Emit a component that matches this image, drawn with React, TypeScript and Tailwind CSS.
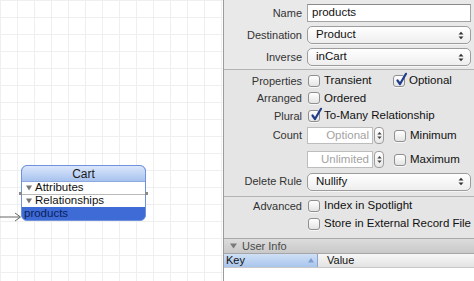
import React from "react";

const font = "font-['Liberation_Sans',Arial,sans-serif]";

function Check() {
  return (
    <svg
      className="absolute -top-[4px] left-[1px]"
      width="13"
      height="15"
      viewBox="0 0 13 15"
    >
      <path
        d="M2.5 8.5 L5 12 L11 1.8"
        fill="none"
        stroke="#1f3c8c"
        strokeWidth="2.2"
        strokeLinecap="round"
        strokeLinejoin="round"
      />
    </svg>
  );
}

function Checkbox({ checked = false }: { checked?: boolean }) {
  return (
    <span className="relative inline-block h-[12px] w-[12px] flex-shrink-0 rounded-[3px] border border-[#8f8f8f] bg-[linear-gradient(to_bottom,#ffffff,#e4e4e4)] shadow-[0_1px_0_rgba(255,255,255,0.7)]">
      {checked && <Check />}
    </span>
  );
}

function UpDown({ color = "#333" }: { color?: string }) {
  return (
    <svg width="6" height="9" viewBox="0 0 6 9">
      <path d="M0.5 3.5 L3 0.8 L5.5 3.5Z" fill={color} />
      <path d="M0.5 5.5 L3 8.2 L5.5 5.5Z" fill={color} />
    </svg>
  );
}

function Select({ value }: { value: string }) {
  return (
    <div className="flex h-[18px] w-[164px] items-center justify-between rounded-[5px] border border-[#9d9d9d] bg-[linear-gradient(to_bottom,#ffffff,#eeeeee)] pl-[8px] pr-[6px] text-[11.5px] text-[#111] shadow-[0_1px_0_rgba(255,255,255,0.6)]">
      <span>{value}</span>
      <UpDown />
    </div>
  );
}

function Label({ children }: { children?: React.ReactNode }) {
  return (
    <span className="w-[83px] flex-shrink-0 pr-[5px] text-right text-[11px] text-[#333]">
      {children}
    </span>
  );
}

function Stepper() {
  return (
    <div className="ml-[1px] flex h-[17px] w-[10px] items-center justify-center rounded-[4px] border border-[#9d9d9d] bg-[linear-gradient(to_bottom,#ffffff,#e8e8e8)]">
      <svg width="5" height="9" viewBox="0 0 5 9">
        <path d="M0.3 3.4 L2.5 1 L4.7 3.4Z" fill="#444" />
        <path d="M0.3 5.6 L2.5 8 L4.7 5.6Z" fill="#444" />
      </svg>
    </div>
  );
}

function CountRow({
  label,
  placeholder,
  check,
}: {
  label?: string;
  placeholder: string;
  check: string;
}) {
  return (
    <div className="flex h-[17px] items-center">
      <Label>{label}</Label>
      <div className="flex h-[17px] w-[66px] items-center justify-end border border-[#bdbdbd] bg-white pr-[3px] text-[11.5px] text-[#a3a3a3]">
        {placeholder}
      </div>
      <Stepper />
      <div className="ml-[10px] flex items-center gap-[4px]">
        <Checkbox />
        <span className="text-[11.5px] text-[#111]">{check}</span>
      </div>
    </div>
  );
}

function Entity() {
  return (
    <div className="absolute left-[21px] top-[165px] w-[125px] overflow-hidden rounded-[6px] border border-[#6f92da] bg-[#3d6ad5] text-[11.5px] leading-none">
      <div className="flex h-[15px] items-center justify-center bg-[linear-gradient(to_bottom,#dbe7fb,#a8c2ef)] text-[12px] text-[#1a1a1a]">
        Cart
      </div>
      <div className="flex h-[13px] items-center gap-[3px] border-t border-[#8ea9e0] bg-white pl-[4px] text-[#111]">
        <svg width="6" height="6" viewBox="0 0 6 6">
          <path d="M0 0.5 H6 L3 5.5Z" fill="#777" />
        </svg>
        Attributes
      </div>
      <div className="flex h-[13px] items-center gap-[3px] border-t border-[#b9b9b9] bg-white pl-[4px] text-[#111]">
        <svg width="6" height="6" viewBox="0 0 6 6">
          <path d="M0 0.5 H6 L3 5.5Z" fill="#777" />
        </svg>
        Relationships
      </div>
      <div className="flex h-[13px] items-center bg-[#3e6bd6] pl-[2px] text-[#0c1f5c]">
        products
      </div>
    </div>
  );
}

export default function App() {
  return (
    <div className={`${font} flex h-[281px] w-[474px] overflow-hidden bg-white`}>
      {/* model canvas */}
      <div className="relative h-full w-[223px] flex-shrink-0 bg-white bg-[linear-gradient(to_right,#efefef_1px,transparent_1px),linear-gradient(to_bottom,#efefef_1px,transparent_1px)] bg-[size:17px_17px]">
        <Entity />
        <span className="absolute left-[19px] top-[192px] h-[3px] w-[3px] bg-[#8a8a8a]" />
        <span className="absolute left-[145px] top-[192px] h-[3px] w-[3px] bg-[#8a8a8a]" />
        <svg
          className="absolute left-0 top-[211px]"
          width="22"
          height="12"
          viewBox="0 0 22 12"
        >
          <path d="M0 6 H20" stroke="#666" strokeWidth="1" />
          <path d="M15 2 L20.5 6 L15 10" fill="none" stroke="#666" strokeWidth="1" />
        </svg>
      </div>

      {/* inspector */}
      <div className="flex h-full w-[251px] flex-col border-l border-[#9b9b9b]">
        <div className="flex flex-col gap-[4px] bg-[#e9e9e9] pb-[3px] pt-[4px]">
          <div className="flex h-[18px] items-center">
            <Label>Name</Label>
            <div className="flex h-[18px] w-[164px] items-center border border-[#a3a3a3] border-t-[#8a8a8a] bg-white pl-[4px] text-[11.5px] text-[#111]">
              products
            </div>
          </div>
          <div className="flex h-[18px] items-center">
            <Label>Destination</Label>
            <Select value="Product" />
          </div>
          <div className="flex h-[18px] items-center">
            <Label>Inverse</Label>
            <Select value="inCart" />
          </div>
        </div>

        <div className="flex flex-col border-t border-[#b3b3b3] bg-[#e5e5e5] pb-[6px] pt-[2px]">
          <div className="flex h-[17.5px] items-center">
            <Label>Properties</Label>
            <div className="ml-[1px] flex w-[85px] items-center gap-[4px]">
              <Checkbox />
              <span className="text-[11.5px] text-[#111]">Transient</span>
            </div>
            <div className="flex items-center gap-[4px]">
              <Checkbox checked />
              <span className="text-[11.5px] text-[#111]">Optional</span>
            </div>
          </div>
          <div className="flex h-[17.5px] items-center">
            <Label>Arranged</Label>
            <div className="ml-[1px] flex items-center gap-[4px]">
              <Checkbox />
              <span className="text-[11.5px] text-[#111]">Ordered</span>
            </div>
          </div>
          <div className="flex h-[17.5px] items-center">
            <Label>Plural</Label>
            <div className="ml-[1px] flex items-center gap-[4px]">
              <Checkbox checked />
              <span className="text-[11.5px] text-[#111]">To-Many Relationship</span>
            </div>
          </div>
          <div className="mt-[2.5px] flex flex-col gap-[7px]">
            <CountRow label="Count" placeholder="Optional" check="Minimum" />
            <CountRow placeholder="Unlimited" check="Maximum" />
          </div>
          <div className="mt-[5px] flex h-[17px] items-center">
            <Label>Delete Rule</Label>
            <Select value="Nullify" />
          </div>
        </div>

        <div className="flex flex-col border-t border-[#b3b3b3] bg-[#e5e5e5] pb-[5px]">
          <div className="flex h-[18px] items-center">
            <Label>Advanced</Label>
            <div className="ml-[1px] flex items-center gap-[4px]">
              <Checkbox />
              <span className="text-[11.5px] text-[#111]">Index in Spotlight</span>
            </div>
          </div>
          <div className="flex h-[18px] items-center">
            <Label />
            <div className="ml-[1px] flex items-center gap-[4px]">
              <Checkbox />
              <span className="whitespace-nowrap text-[11.5px] text-[#111]">
                Store in External Record File
              </span>
            </div>
          </div>
        </div>

        <div className="flex h-[15px] items-center gap-[5px] border-t border-[#a9a9a9] bg-[linear-gradient(to_bottom,#dcdcdc,#c9c9c9)] pl-[6px] text-[11px] text-[#4a4a4a]">
          <svg width="7" height="6" viewBox="0 0 7 6">
            <path d="M0 0.5 H7 L3.5 5.5Z" fill="#7a7a7a" />
          </svg>
          User Info
        </div>
        <div className="flex h-[14px] border-t border-[#a6a6a6] text-[11px] text-[#111]">
          <div className="flex w-[94px] items-center justify-between border-r border-[#8aa3cf] bg-[linear-gradient(to_bottom,#cfe0f6,#a9c5ec)] pl-[2px] pr-[3px]">
            <span>Key</span>
            <svg width="6" height="5" viewBox="0 0 6 5">
              <path d="M0 4.5 H6 L3 0Z" fill="#7d9ed0" />
            </svg>
          </div>
          <div className="flex flex-1 items-center bg-[linear-gradient(to_bottom,#f7f7f7,#e3e3e3)] pl-[9px]">
            Value
          </div>
        </div>
        <div className="flex-1 border-t border-[#c8c8c8] bg-white" />
      </div>
    </div>
  );
}
